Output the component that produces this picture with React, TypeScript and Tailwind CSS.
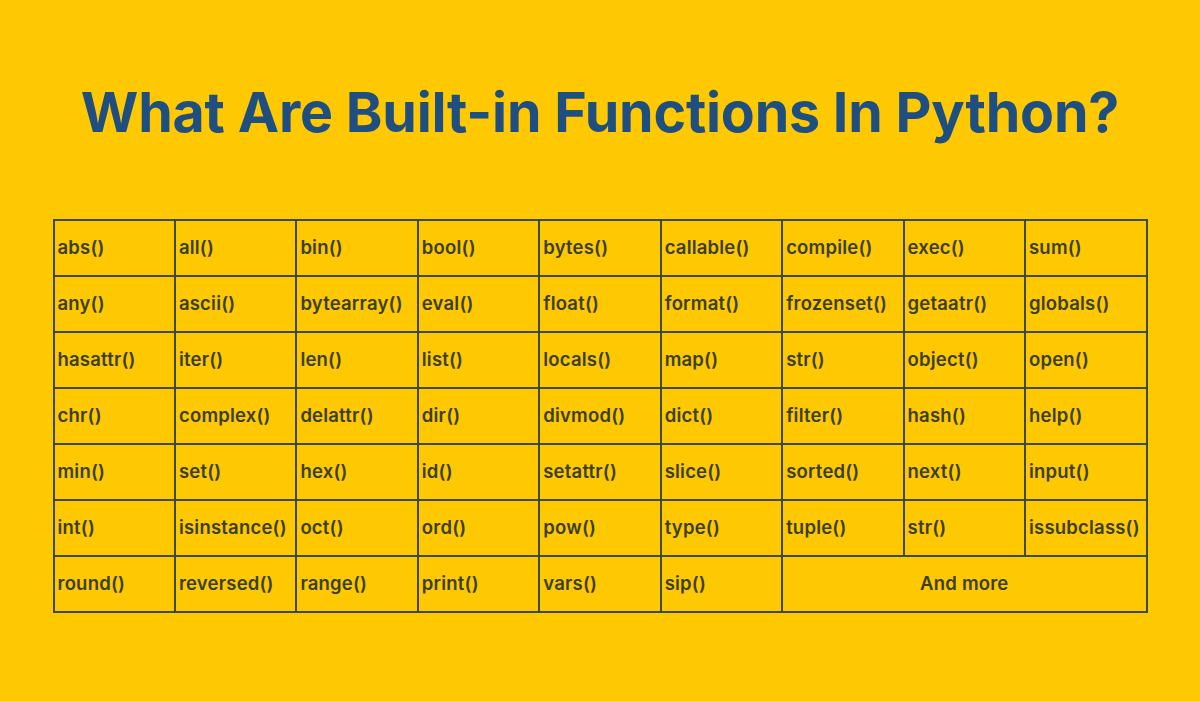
import React from "react";

const rows: string[][] = [
  ["abs()", "all()", "bin()", "bool()", "bytes()", "callable()", "compile()", "exec()", "sum()"],
  ["any()", "ascii()", "bytearray()", "eval()", "float()", "format()", "frozenset()", "getaatr()", "globals()"],
  ["hasattr()", "iter()", "len()", "list()", "locals()", "map()", "str()", "object()", "open()"],
  ["chr()", "complex()", "delattr()", "dir()", "divmod()", "dict()", "filter()", "hash()", "help()"],
  ["min()", "set()", "hex()", "id()", "setattr()", "slice()", "sorted()", "next()", "input()"],
  ["int()", "isinstance()", "oct()", "ord()", "pow()", "type()", "tuple()", "str()", "issubclass()"],
  ["round()", "reversed()", "range()", "print()", "vars()", "sip()"],
];

export default function App() {
  return (
    <div
      className="w-[1200px] h-[701px] bg-[#fec803] flex flex-col items-center"
      style={{ fontFamily: "Inter, 'Noto Sans', sans-serif" }}
    >
      <h1 className="mt-[80px] h-[64px] text-[55.5px] leading-[64px] font-bold text-[#1f4e80] tracking-[-0.2px] whitespace-nowrap">
        What Are Built-in Functions In Python?
      </h1>
      <table className="mt-[75px] w-[1095px] table-fixed border-collapse border-2 border-[#3d4a2c]">
        <tbody>
          {rows.map((r, i) => (
            <tr key={i} className="h-[56px]">
              {r.map((c, j) => (
                <td
                  key={j}
                  className="border-2 border-[#3d4a2c] pl-[3px] text-[18.5px] font-semibold text-[#3c3f1b] whitespace-nowrap tracking-[0.2px]"
                >
                  {c}
                </td>
              ))}
              {i === 6 && (
                <td
                  colSpan={3}
                  className="border-2 border-[#3d4a2c] text-center text-[18.5px] font-semibold text-[#3c3f1b] tracking-[0.2px]"
                >
                  And more
                </td>
              )}
            </tr>
          ))}
        </tbody>
      </table>
    </div>
  );
}
